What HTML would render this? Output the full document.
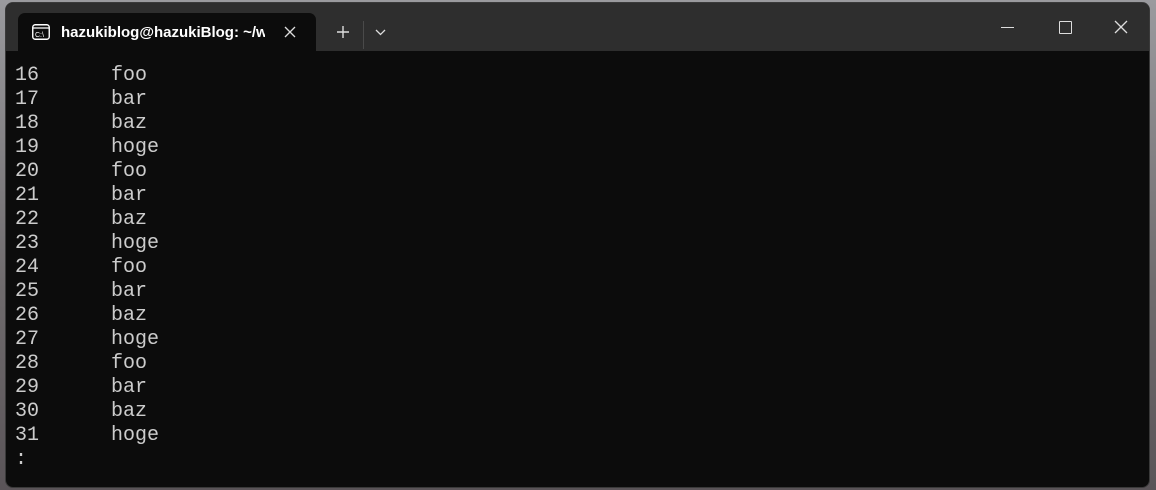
<!DOCTYPE html>
<html><head><meta charset="utf-8"><style>
html,body{margin:0;padding:0}
body{width:1156px;height:490px;overflow:hidden;background:linear-gradient(180deg,#9a9a9e 0%,#6e6a6c 60%,#5a5458 100%);position:relative;font-family:"Liberation Sans",sans-serif}
.win{position:absolute;left:5px;top:2px;width:1145px;height:486px;background:#0c0c0c;border-radius:8px;overflow:hidden;border:1px solid #3a3a3a;box-sizing:border-box}
.bar{position:absolute;left:0;top:0;right:0;height:48px;background:#2e2e2e}
.tab{position:absolute;left:12px;top:10px;width:298px;height:38px;background:#0c0c0c;border-radius:7px 7px 0 0}
.tab .t{position:absolute;left:43px;top:11px;color:#fff;font-size:15px;font-weight:bold;white-space:nowrap;width:204px;overflow:hidden}
.term{position:absolute;left:9px;top:61px;color:#cccccc;font-family:"Liberation Mono","DejaVu Sans Mono",monospace;font-size:20px;line-height:24px;white-space:pre}
svg{position:absolute}
</style></head><body>
<div class="win">
<div class="bar">
<div class="tab">
<svg style="left:14px;top:11px" width="18" height="16" viewBox="0 0 18 16"><rect x="0.75" y="0.75" width="16.5" height="14.5" rx="2.5" fill="none" stroke="#fff" stroke-width="1.4"/><line x1="1" y1="4" x2="17" y2="4" stroke="#fff" stroke-width="1.2"/><text x="3" y="13" font-size="7" fill="#fff" font-family="Liberation Sans">C:\</text></svg>
<div class="t">hazukiblog@hazukiBlog: ~/work</div>
<svg style="left:266px;top:13px" width="12" height="12" viewBox="0 0 12 12"><path d="M1 1L11 11M11 1L1 11" stroke="#ddd" stroke-width="1.3"/></svg>
</div>
<svg style="left:330px;top:22px" width="14" height="14" viewBox="0 0 14 14"><path d="M7 1V13M1 7H13" stroke="#ddd" stroke-width="1.4"/></svg>
<div style="position:absolute;left:357px;top:18px;width:1px;height:28px;background:#4a4a4a"></div>
<svg style="left:369px;top:26px" width="11" height="7" viewBox="0 0 11 7"><path d="M1 1L5.5 5.5L10 1" stroke="#ddd" stroke-width="1.3" fill="none"/></svg>
<div style="position:absolute;left:995px;top:24px;width:13px;height:1px;background:#ddd"></div>
<div style="position:absolute;left:1053px;top:18px;width:11px;height:11px;border:1.3px solid #ddd;border-radius:1px"></div>
<svg style="left:1108px;top:17px" width="14" height="14" viewBox="0 0 14 14"><path d="M1 1L13 13M13 1L1 13" stroke="#ddd" stroke-width="1.3"/></svg>
</div>
<div class="term">16      foo
17      bar
18      baz
19      hoge
20      foo
21      bar
22      baz
23      hoge
24      foo
25      bar
26      baz
27      hoge
28      foo
29      bar
30      baz
31      hoge
:</div>
</div>
</body></html>
